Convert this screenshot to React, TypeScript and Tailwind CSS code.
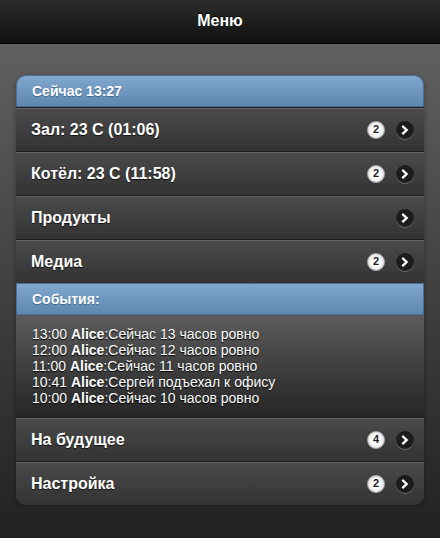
import { Fragment } from "react";

type Row = { label: string; count?: number };

const topRows: Row[] = [
  { label: "Зал: 23 С (01:06)", count: 2 },
  { label: "Котёл: 23 С (11:58)", count: 2 },
  { label: "Продукты" },
  { label: "Медиа", count: 2 },
];

const bottomRows: Row[] = [
  { label: "На будущее", count: 4 },
  { label: "Настройка", count: 2 },
];

const events = [
  { time: "13:00", text: "Сейчас 13 часов ровно" },
  { time: "12:00", text: "Сейчас 12 часов ровно" },
  { time: "11:00", text: "Сейчас 11 часов ровно" },
  { time: "10:41", text: "Сергей подъехал к офису" },
  { time: "10:00", text: "Сейчас 10 часов ровно" },
];

function ArrowIcon() {
  return (
    <span className="flex h-[18px] w-[18px] items-center justify-center rounded-full bg-[#1c1c1c] shadow-[0_1px_0_rgba(255,255,255,0.25)]">
      <svg width="10" height="10" viewBox="0 0 10 10">
        <path
          d="M3.2 1.8 L6.6 5 L3.2 8.2"
          fill="none"
          stroke="#fff"
          strokeWidth="2.4"
          strokeLinecap="square"
        />
      </svg>
    </span>
  );
}

function Count({ n }: { n: number }) {
  return (
    <span className="flex h-[18px] w-[18px] items-center justify-center rounded-full border border-[#aaa] bg-radial from-[#ffffff] from-35% to-[#cfcfcf] text-[11px] font-bold leading-none text-[#222] [text-shadow:0_1px_0_#fff]">
      {n}
    </span>
  );
}

function ListRow({ row, last }: { row: Row; last?: boolean }) {
  return (
    <div
      className={`flex h-[44px] items-center border-t border-[#1e1e1e] bg-linear-to-b from-[#4b4b4b] to-[#333333] pl-[15px] pr-[10px] shadow-[inset_0_1px_0_rgba(255,255,255,0.14)] ${
        last ? "rounded-b-[10px]" : ""
      }`}
    >
      <span className="flex-1 text-[16px] font-bold text-white [text-shadow:0_1px_1px_#111]">
        {row.label}
      </span>
      <div className="flex items-center gap-[11px]">
        {row.count !== undefined && <Count n={row.count} />}
        <ArrowIcon />
      </div>
    </div>
  );
}

function Divider({ label, top }: { label: string; top?: boolean }) {
  return (
    <div
      className={`flex h-[32px] items-center border border-[#456f9a] bg-linear-to-b from-[#81a8ce] to-[#5e87b0] pl-[15px] text-[14px] font-bold text-white [text-shadow:0_1px_1px_#3e6790] ${
        top ? "rounded-t-[10px]" : ""
      }`}
    >
      {label}
    </div>
  );
}

export default function App() {
  return (
    <div className="flex h-[538px] w-[440px] flex-col bg-linear-to-b from-[#676767] to-[#222222] font-['Liberation_Sans',Arial,sans-serif]">
      {/* Header */}
      <div className="flex h-[44px] shrink-0 items-center justify-center border-b border-[#000] bg-linear-to-b from-[#2c2c2c] to-[#111111] pb-[2px] text-[16px] font-bold text-white [text-shadow:0_-1px_1px_#000]">
        Меню
      </div>

      {/* Content */}
      <div className="px-[16px] pt-[31px]">
        <div className="rounded-[10px] shadow-[0_1px_4px_rgba(0,0,0,0.35)]">
          <Divider label="Сейчас 13:27" top />
          {topRows.map((r) => (
            <ListRow key={r.label} row={r} />
          ))}
          <Divider label="События:" />
          <div className="bg-linear-to-b from-[#5c5c5c] to-[#262626] pb-[11px] pl-[16px] pt-[11px] text-[14px] leading-[16px] text-white [text-shadow:0_1px_1px_#000]">
            {events.map((e) => (
              <Fragment key={e.time}>
                <div>
                  {e.time} <b>Alice</b>:{e.text}
                </div>
              </Fragment>
            ))}
          </div>
          {bottomRows.map((r, i) => (
            <ListRow key={r.label} row={r} last={i === bottomRows.length - 1} />
          ))}
        </div>
      </div>
    </div>
  );
}
